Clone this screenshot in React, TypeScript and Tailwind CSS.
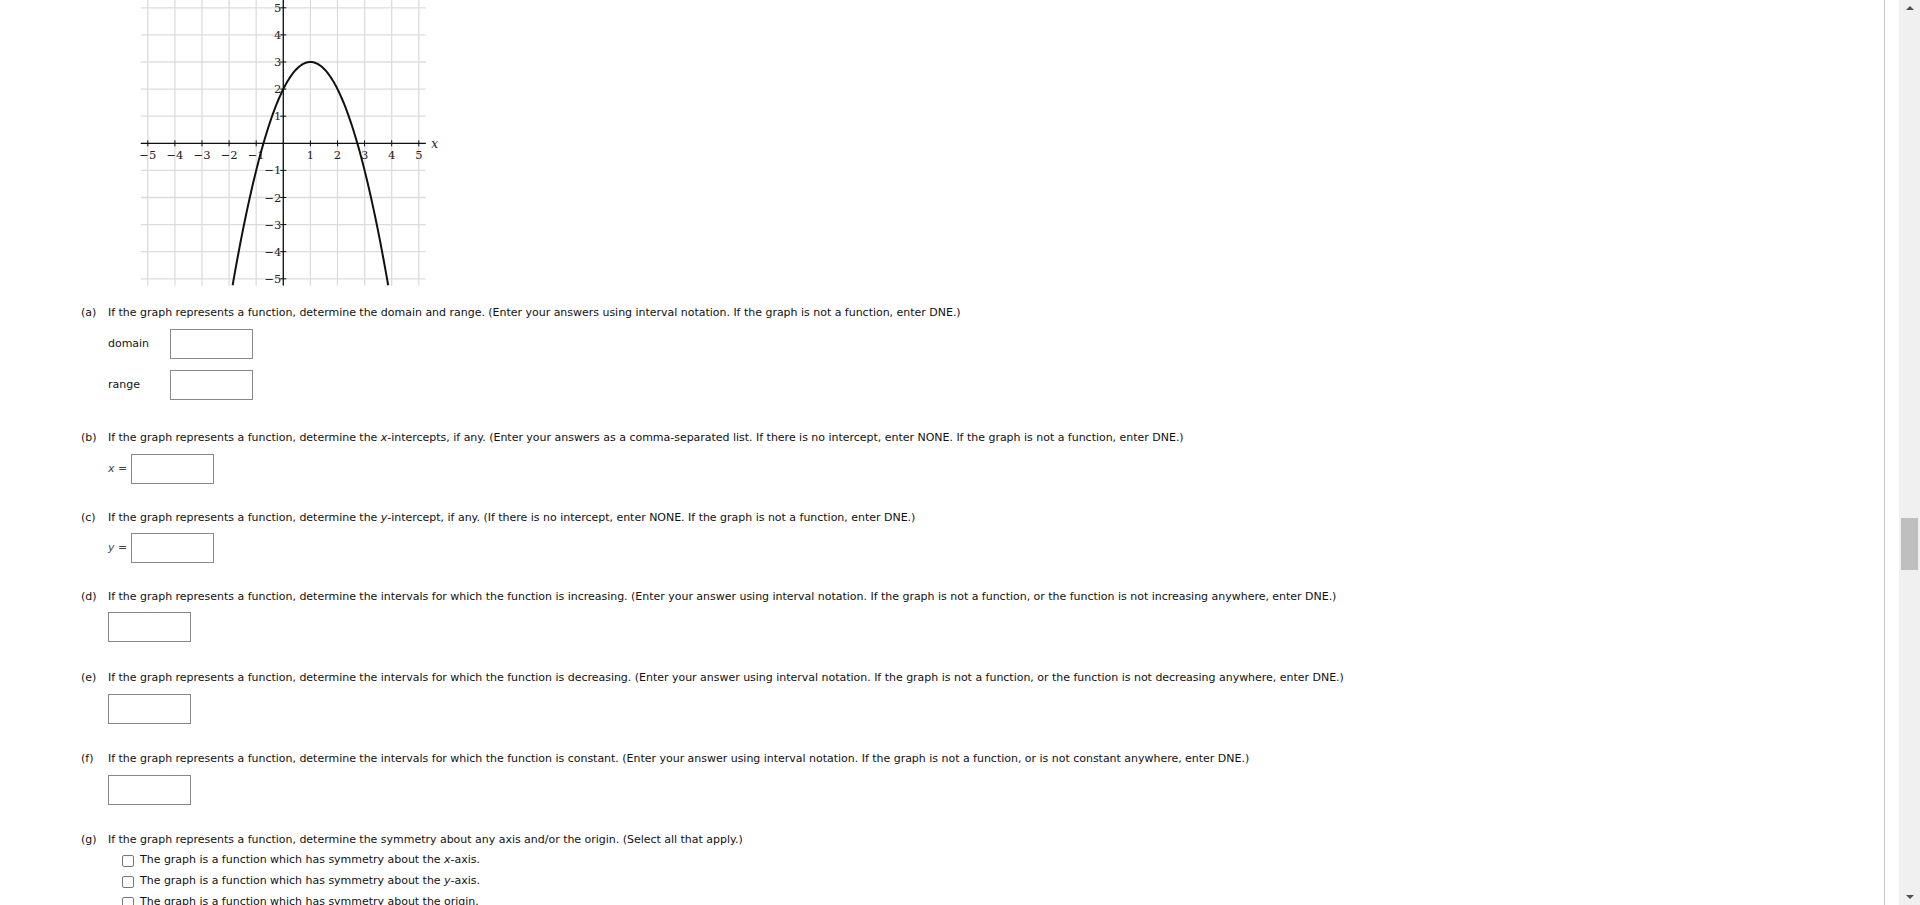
import React from "react";

const U = 27.1;
const OX = 163.3;
const OY = 143.3;

function px(x: number) {
  return OX + x * U;
}
function py(y: number) {
  return OY - y * U;
}

function Graph() {
  const ticks = [-5, -4, -3, -2, -1, 1, 2, 3, 4, 5];
  const all = [-5, -4, -3, -2, -1, 0, 1, 2, 3, 4, 5];
  const left = OX - 5.26 * U;
  const right = OX + 5.26 * U;
  const bottom = OY + 5.25 * U;

  const pts: string[] = [];
  for (let i = 0; i <= 120; i++) {
    const x = -1.87 + (5.74 * i) / 120;
    const y = 3 - (x - 1) * (x - 1);
    pts.push(`${px(x).toFixed(2)},${py(y).toFixed(2)}`);
  }

  return (
    <svg width="340" height="290" className="block ml-[120px]">
      {/* grid */}
      {all.map((i) => (
        <line key={"v" + i} x1={px(i)} x2={px(i)} y1={0} y2={bottom} stroke="#dcdcdc" strokeWidth="1.3" />
      ))}
      {all.map((j) => (
        <line key={"h" + j} x1={left} x2={right} y1={py(j)} y2={py(j)} stroke="#dcdcdc" strokeWidth="1.3" />
      ))}

      {/* axes */}
      <line x1={left} x2={right} y1={OY} y2={OY} stroke="#111" strokeWidth="1.3" />
      <line x1={OX} x2={OX} y1={0} y2={bottom} stroke="#111" strokeWidth="1.3" />
      {ticks.map((t) => (
        <g key={"t" + t}>
          <line x1={px(t)} x2={px(t)} y1={OY - 3} y2={OY + 3} stroke="#111" strokeWidth="1" />
          <line x1={OX - 3} x2={OX + 3} y1={py(t)} y2={py(t)} stroke="#111" strokeWidth="1" />
        </g>
      ))}

      {/* labels */}
      <g fontFamily='"DejaVu Serif", "Liberation Serif", serif' fontSize="11.5" fill="#222">
        {ticks.map((t) => (
          <text key={"xl" + t} x={px(t)} y={OY + 16} textAnchor="middle">
            {t < 0 ? `\u2212${-t}` : t}
          </text>
        ))}
        {ticks.map((t) => (
          <text key={"yl" + t} x={OX - 2} y={py(t) + 4} textAnchor="end">
            {t < 0 ? `\u2212${-t}` : t}
          </text>
        ))}
        <text x={OX + 148} y={OY + 5} fontStyle="italic" fontSize="12">
          x
        </text>
      </g>

      {/* curve */}
      <polyline points={pts.join(" ")} fill="none" stroke="#111" strokeWidth="2" />
    </svg>
  );
}

function Box({ className = "" }: { className?: string }) {
  return <div className={"w-[83px] h-[30px] border border-[#888] bg-white " + className} />;
}

function Question({ label, children }: { label: string; children: React.ReactNode }) {
  return (
    <div className="flex leading-[14px]">
      <span className="w-[27px] shrink-0">({label})</span>
      <span>{children}</span>
    </div>
  );
}

function Check({ children }: { children: React.ReactNode }) {
  return (
    <div className="flex items-center h-[21px] pl-[41px]">
      <span className="w-[12px] h-[12px] border border-[#777] rounded-[2px] bg-white mr-[6px]" />
      <span>{children}</span>
    </div>
  );
}

export default function App() {
  return (
    <div
      className="flex h-[905px] overflow-hidden bg-white text-[11px] text-[#111] tracking-[-0.02px]"
      style={{ fontFamily: '"DejaVu Sans", Verdana, sans-serif' }}
    >
      <div className="flex-1 border-r border-[#c8c8c8] pl-[81px]">
        <div className="-ml-[81px]">
          <Graph />
        </div>

        <div className="mt-[16px]">
          <Question label="a">
            If the graph represents a function, determine the domain and range. (Enter your answers using interval
            notation. If the graph is not a function, enter DNE.)
          </Question>
          <div className="pl-[27px] mt-[9px] flex flex-col gap-[11px]">
            <div className="flex items-center">
              <span className="w-[62px]">domain</span>
              <Box />
            </div>
            <div className="flex items-center">
              <span className="w-[62px]">range</span>
              <Box />
            </div>
          </div>
        </div>

        <div className="mt-[31px]">
          <Question label="b">
            If the graph represents a function, determine the <i>x</i>-intercepts, if any. (Enter your answers as a
            comma-separated list. If there is no intercept, enter NONE. If the graph is not a function, enter DNE.)
          </Question>
          <div className="pl-[27px] mt-[9px] flex items-center">
            <span className="w-[23px] text-[#444]">
              <i>x</i> =
            </span>
            <Box />
          </div>
        </div>

        <div className="mt-[27px]">
          <Question label="c">
            If the graph represents a function, determine the <i>y</i>-intercept, if any. (If there is no intercept,
            enter NONE. If the graph is not a function, enter DNE.)
          </Question>
          <div className="pl-[27px] mt-[8px] flex items-center">
            <span className="w-[23px] text-[#444]">
              <i>y</i> =
            </span>
            <Box />
          </div>
        </div>

        <div className="mt-[27px]">
          <Question label="d">
            If the graph represents a function, determine the intervals for which the function is increasing. (Enter
            your answer using interval notation. If the graph is not a function, or the function is not increasing
            anywhere, enter DNE.)
          </Question>
          <div className="pl-[27px] mt-[8px]">
            <Box />
          </div>
        </div>

        <div className="mt-[29px]">
          <Question label="e">
            If the graph represents a function, determine the intervals for which the function is decreasing. (Enter
            your answer using interval notation. If the graph is not a function, or the function is not decreasing
            anywhere, enter DNE.)
          </Question>
          <div className="pl-[27px] mt-[9px]">
            <Box />
          </div>
        </div>

        <div className="mt-[28px]">
          <Question label="f">
            If the graph represents a function, determine the intervals for which the function is constant. (Enter
            your answer using interval notation. If the graph is not a function, or is not constant anywhere, enter
            DNE.)
          </Question>
          <div className="pl-[27px] mt-[9px]">
            <Box />
          </div>
        </div>

        <div className="mt-[28px]">
          <Question label="g">
            If the graph represents a function, determine the symmetry about any axis and/or the origin. (Select all
            that apply.)
          </Question>
          <div className="mt-[3px]">
            <Check>
              The graph is a function which has symmetry about the <i>x</i>-axis.
            </Check>
            <Check>
              The graph is a function which has symmetry about the <i>y</i>-axis.
            </Check>
            <Check>The graph is a function which has symmetry about the origin.</Check>
          </div>
        </div>
      </div>

      {/* scrollbar */}
      <div className="w-[14px] shrink-0" />
      <div className="w-[21px] shrink-0 bg-[#f0f0f0] flex flex-col items-center">
        <svg width="10" height="14" className="mt-[1px]">
          <polygon points="1,9 5,5 9,9" fill="#505050" />
        </svg>
        <div className="mt-[503px] w-[17px] h-[52px] bg-[#bfbfbf]" />
        <div className="flex-1" />
        <svg width="10" height="14" className="mb-[1px]">
          <polygon points="1,5 9,5 5,9" fill="#505050" />
        </svg>
      </div>
    </div>
  );
}
